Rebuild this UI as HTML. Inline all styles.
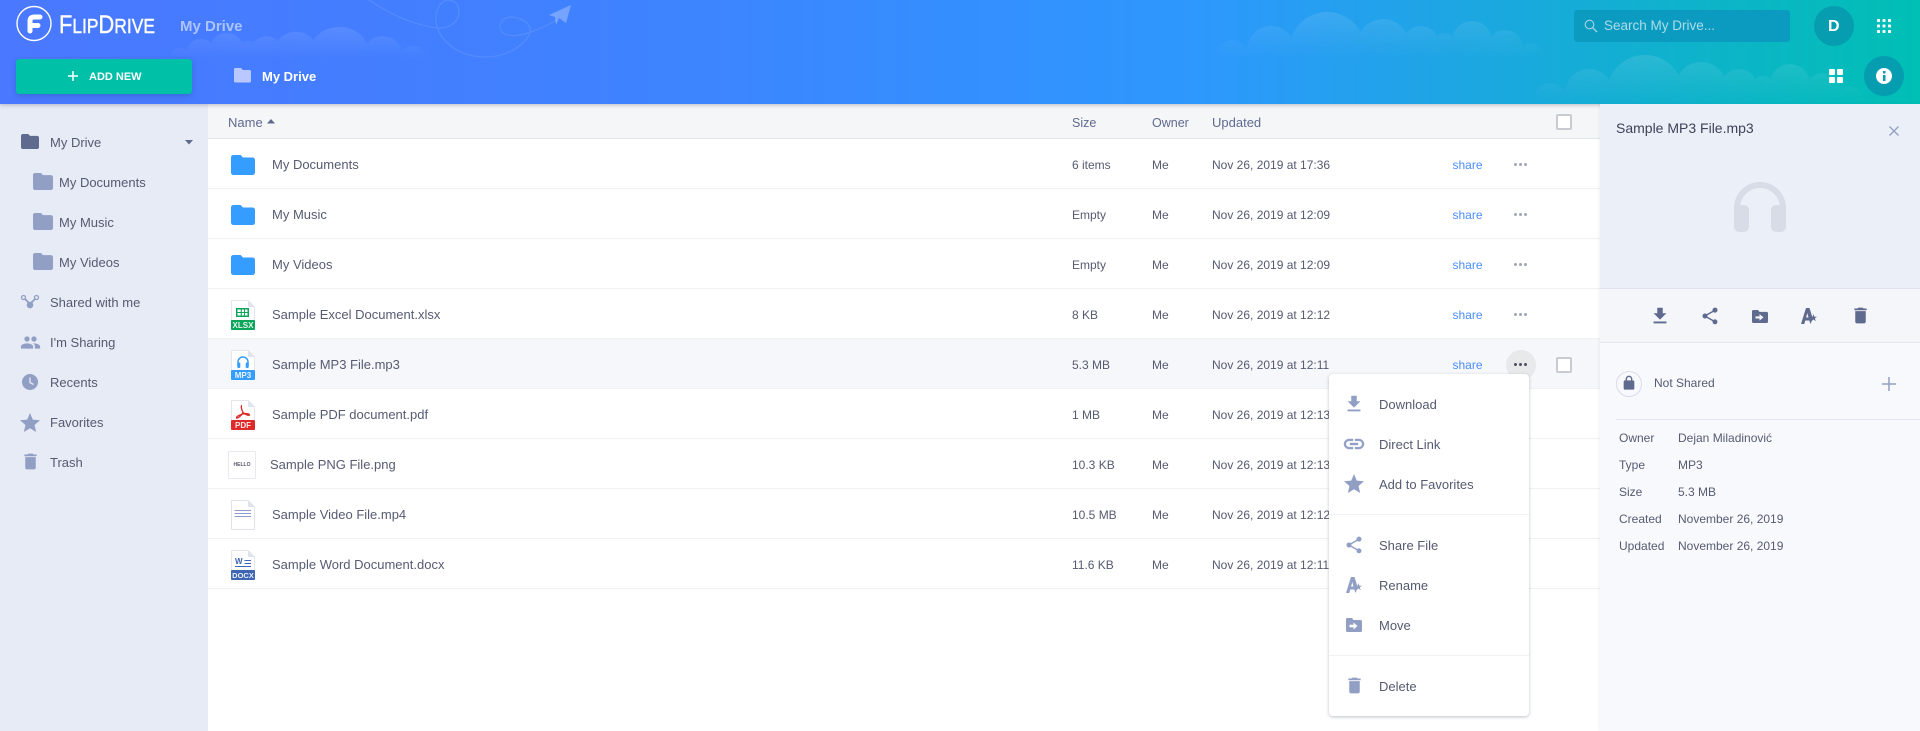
<!DOCTYPE html>
<html lang="en"><head><meta charset="utf-8"><title>FlipDrive</title>
<style>
html,body{margin:0;padding:0;width:1920px;height:731px;overflow:hidden;background:#fff;font-family:"Liberation Sans",sans-serif;color:#555a70}
.a,.t,svg.a{position:absolute}
.t{line-height:20px;white-space:nowrap;font-size:13px}
#hd{position:absolute;left:0;top:0;width:1920px;height:104px;background:linear-gradient(90deg,#4a78ff 0%,#3f82ff 33%,#2d98fd 62.5%,#00bfb4 100%);box-shadow:0 1px 4px rgba(40,50,80,.3);z-index:3}
#sb{position:absolute;left:0;top:104px;width:208px;height:627px;background:#e7ebf6;z-index:1}
#pn{position:absolute;left:1600px;top:104px;width:320px;height:627px;background:#f8f9fc;z-index:4;box-shadow:-1px 0 3px rgba(60,70,100,.07)}
#th{position:absolute;left:208px;top:104px;width:1392px;height:34px;background:#f5f6f8;border-bottom:1px solid #e4e5ea}
.r{position:absolute;left:208px;width:1392px;height:49px;border-bottom:1px solid #f0f1f4;background:#fff}
.r .t{font-size:12px;top:16px}
.r .t.n{font-size:13px;left:64px;color:#565b72}
.s{left:864px}.o{left:944px}.u{left:1004px}
.r .t.h{left:1244.5px;color:#4a8dff}
.d{position:absolute;left:1306px;top:24px;width:3px;height:3px;border-radius:50%;background:#a2a6b4;box-shadow:5px 0 0 #a2a6b4,10px 0 0 #a2a6b4}
.f{position:absolute;left:23px;top:11px}
.cb{position:absolute;width:12px;height:12px;border:2px solid #c9cbd2;border-radius:2px;background:#fff}
#m{position:absolute;left:1329px;top:374px;width:200px;height:342px;background:#fff;border-radius:4px;box-shadow:0 1px 3px rgba(40,45,70,.3);z-index:2}
#m .l{position:absolute;left:50px;line-height:20px;font-size:13px;white-space:nowrap;color:#555a70}
#m hr{position:absolute;left:0;width:200px;margin:0;border:0;border-top:1px solid #f0f1f4}
.k{left:19px;color:#565b72;font-size:12px}
.v{left:78px;color:#565b72;font-size:12px}
</style></head><body>

<div id="hd">
<svg class="a" style="left:0;top:0" width="1920" height="104" viewBox="0 0 1920 104">
<mask id="cm" maskUnits="userSpaceOnUse" x="1200" y="0" width="360" height="62"><rect x="1200" y="0" width="360" height="60" fill="url(#cg)"/></mask>
<linearGradient id="cg" gradientUnits="userSpaceOnUse" x1="0" y1="12" x2="0" y2="60"><stop offset="0" stop-color="#fff" stop-opacity=".11"/><stop offset="1" stop-color="#fff" stop-opacity="0"/></linearGradient>
<g fill="#fff">
<g mask="url(#cm)"><circle cx="1232" cy="56" r="16"/><circle cx="1271" cy="50" r="24"/><circle cx="1327" cy="50" r="38"/><circle cx="1383" cy="45" r="26"/><circle cx="1421" cy="44" r="18"/><circle cx="1445" cy="45" r="12"/><circle cx="1472" cy="41" r="20"/><circle cx="1505" cy="48" r="18"/><circle cx="1532" cy="55" r="12"/></g>
<g transform="translate(318 43)"><g mask="url(#cm)"><circle cx="1232" cy="56" r="16"/><circle cx="1271" cy="50" r="24"/><circle cx="1327" cy="50" r="38"/><circle cx="1383" cy="45" r="26"/><circle cx="1421" cy="44" r="18"/><circle cx="1445" cy="45" r="12"/><circle cx="1472" cy="41" r="20"/><circle cx="1505" cy="48" r="18"/><circle cx="1532" cy="55" r="12"/></g></g>
<g transform="matrix(-.776 0 0 .667 1369 19)"><g mask="url(#cm)"><circle cx="1232" cy="56" r="16"/><circle cx="1271" cy="50" r="24"/><circle cx="1327" cy="50" r="38"/><circle cx="1383" cy="45" r="26"/><circle cx="1421" cy="44" r="18"/><circle cx="1445" cy="45" r="12"/><circle cx="1472" cy="41" r="20"/><circle cx="1505" cy="48" r="18"/><circle cx="1532" cy="55" r="12"/></g></g>
</g>
<path d="M369 0C395 17 412 24 437 28C449 29 459 22 459 11C459 3 453 0 447 0C439 2 435 12 436 22C438 38 455 57 486 57C504 57 524 47 530 33C532 24 522 17 510 17C500 18 497 28 503 33C513 40 535 32 557 20" fill="none" stroke="#fff" stroke-opacity=".1" stroke-width="1.2"/>
<path d="M549 15L571 5L566 23L559 18L556 25L555 17Z" fill="#fff" fill-opacity=".28"/>
<circle cx="34" cy="23.5" r="17" fill="none" stroke="#fff" stroke-width="1.4"/>
<path d="M30 31V21C30 18 32 17 35 17H40M30 25.500H38" fill="none" stroke="#fff" stroke-width="5" stroke-linecap="round"/>
<text x="59" y="33" fill="#fff" font-family="Liberation Sans" font-weight="400" font-size="20" stroke="#fff" stroke-width=".4" textLength="96" lengthAdjust="spacingAndGlyphs"><tspan font-size="25">F</tspan>LIP<tspan font-size="25">D</tspan>RIVE</text>
<circle cx="1834" cy="26" r="20" fill="#069db0"/>
<circle cx="1884" cy="76" r="20" fill="#069db0"/>
<circle cx="1884" cy="76" r="8" fill="#fff"/>
<rect x="1883" y="71" width="2.500" height="2.500" fill="#069db0"/><rect x="1883" y="75" width="2.500" height="6" fill="#069db0"/>
<g fill="#fff">
<rect x="1829" y="69" width="6" height="6" rx="1"/><rect x="1837" y="69" width="6" height="6" rx="1"/><rect x="1829" y="77" width="6" height="6" rx="1"/><rect x="1837" y="77" width="6" height="6" rx="1"/>
<rect x="1877" y="19" width="3" height="3" rx=".8"/><rect x="1882.500" y="19" width="3" height="3" rx=".8"/><rect x="1888" y="19" width="3" height="3" rx=".8"/>
<rect x="1877" y="24.500" width="3" height="3" rx=".8"/><rect x="1882.500" y="24.500" width="3" height="3" rx=".8"/><rect x="1888" y="24.500" width="3" height="3" rx=".8"/>
<rect x="1877" y="30" width="3" height="3" rx=".8"/><rect x="1882.500" y="30" width="3" height="3" rx=".8"/><rect x="1888" y="30" width="3" height="3" rx=".8"/>
</g>
<path d="M234 69.500a1.500 1.500 0 0 1 1.500-1.500H241l2 2h6.500a1.500 1.500 0 0 1 1.500 1.500V81a1.500 1.500 0 0 1-1.500 1.500h-14A1.500 1.500 0 0 1 234 81Z" fill="#b9c9ff"/>
</svg>
<div class="t" style="left:180px;top:17px;font-size:15px;font-weight:700;color:rgba(255,255,255,.55)">My Drive</div>
<div class="a" style="left:16px;top:59px;width:176px;height:35px;background:#00c0a8;border-radius:3px;box-shadow:0 2px 6px rgba(30,50,120,.25)"></div>
<svg class="a" style="left:68px;top:71px" width="10" height="10" viewBox="0 0 10 10"><path d="M5 0V10M0 5H10" stroke="#fff" stroke-width="1.500"/></svg>
<div class="t" style="left:89px;top:67px;font-size:11px;font-weight:700;color:#fff">ADD NEW</div>
<div class="t" style="left:262px;top:67px;font-weight:700;color:#fff">My Drive</div>
<div class="a" style="left:1574px;top:10px;width:216px;height:32px;background:#0c9bc0;border-radius:3px"></div>
<svg class="a" style="left:1584px;top:19px" width="14" height="14" viewBox="0 0 14 14"><circle cx="5.500" cy="5.500" r="4.300" fill="none" stroke="#a8d4e4" stroke-width="1.100"/><path d="M8.700 8.700L13 13" stroke="#a8d4e4" stroke-width="1.300"/></svg>
<div class="t" style="left:1604px;top:16px;font-size:13.500px;color:rgba(255,255,255,.65)">Search My Drive...</div>
<div class="t" style="left:1828px;top:17px;font-size:16px;font-weight:700;color:#fff">D</div>
</div>

<div id="sb">
<svg class="a" style="left:21px;top:30px" width="18" height="15" viewBox="2 4 20 16" preserveAspectRatio="none"><path d="M10 4H4c-1.100 0-2 .9-2 2v12c0 1.100.9 2 2 2h16c1.100 0 2-.9 2-2V8c0-1.100-.9-2-2-2h-8l-2-2z" fill="#5f6a8f"/></svg>
<div class="t" style="left:50px;top:29px">My Drive</div>
<svg class="a" style="left:185px;top:36px" width="8" height="5" viewBox="0 0 8 5"><path d="M0 0H8L4 4.500Z" fill="#5f6a8f"/></svg>
<svg class="a" style="left:33px;top:69px" width="20" height="17" viewBox="2 4 20 16" preserveAspectRatio="none"><path d="M10 4H4c-1.100 0-2 .9-2 2v12c0 1.100.9 2 2 2h16c1.100 0 2-.9 2-2V8c0-1.100-.9-2-2-2h-8l-2-2z" fill="#929fc5"/></svg>
<div class="t" style="left:59px;top:69px">My Documents</div>
<svg class="a" style="left:33px;top:109px" width="20" height="17" viewBox="2 4 20 16" preserveAspectRatio="none"><path d="M10 4H4c-1.100 0-2 .9-2 2v12c0 1.100.9 2 2 2h16c1.100 0 2-.9 2-2V8c0-1.100-.9-2-2-2h-8l-2-2z" fill="#929fc5"/></svg>
<div class="t" style="left:59px;top:109px">My Music</div>
<svg class="a" style="left:33px;top:149px" width="20" height="17" viewBox="2 4 20 16" preserveAspectRatio="none"><path d="M10 4H4c-1.100 0-2 .9-2 2v12c0 1.100.9 2 2 2h16c1.100 0 2-.9 2-2V8c0-1.100-.9-2-2-2h-8l-2-2z" fill="#929fc5"/></svg>
<div class="t" style="left:59px;top:149px">My Videos</div>
<svg class="a" style="left:20px;top:190px" width="20" height="16" viewBox="0 0 20 16"><path d="M4 4L10 10L16 4" fill="none" stroke="#929fc5" stroke-width="1.800"/><circle cx="3.500" cy="3.500" r="2" fill="#e7ebf6" stroke="#929fc5" stroke-width="1.300"/><circle cx="16.500" cy="3.500" r="2" fill="#e7ebf6" stroke="#929fc5" stroke-width="1.300"/><circle cx="10" cy="11" r="3.300" fill="#929fc5"/></svg>
<div class="t" style="left:50px;top:189px">Shared with me</div>
<svg class="a" style="left:19.500px;top:228px" width="21" height="21" viewBox="0 0 24 24"><path d="M16 11c1.660 0 2.990-1.340 2.990-3S17.660 5 16 5c-1.660 0-3 1.340-3 3s1.340 3 3 3zm-8 0c1.660 0 2.990-1.340 2.990-3S9.660 5 8 5C6.340 5 5 6.340 5 8s1.340 3 3 3zm0 2c-2.330 0-7 1.170-7 3.500V19h14v-2.500c0-2.330-4.670-3.500-7-3.500zm8 0c-.29 0-.62.02-.97.05 1.160.84 1.970 1.970 1.970 3.450V19h6v-2.500c0-2.330-4.670-3.500-7-3.500z" fill="#929fc5"/></svg>
<div class="t" style="left:50px;top:229px">I'm Sharing</div>
<svg class="a" style="left:21px;top:269px" width="18" height="18" viewBox="0 0 18 18"><circle cx="9" cy="9" r="8" fill="#929fc5"/><path d="M9 4.500V9.500L12.500 11.500" fill="none" stroke="#e7ebf6" stroke-width="1.300"/></svg>
<div class="t" style="left:50px;top:269px">Recents</div>
<svg class="a" style="left:18px;top:307px" width="24" height="24" viewBox="0 0 24 24"><path d="M12 17.270L18.180 21l-1.640-7.030L22 9.240l-7.190-.61L12 2 9.190 8.630 2 9.240l5.460 4.730L5.820 21z" fill="#929fc5"/></svg>
<div class="t" style="left:50px;top:309px">Favorites</div>
<svg class="a" style="left:19.500px;top:347px" width="21" height="21" viewBox="0 0 24 24"><path d="M6 19c0 1.100.9 2 2 2h8c1.100 0 2-.9 2-2V7H6v12zM19 4h-3.500l-1-1h-5l-1 1H5v2h14V4z" fill="#929fc5"/></svg>
<div class="t" style="left:50px;top:349px">Trash</div>
</div>

<div id="th">
<div class="t" style="left:20px;top:9px;color:#5f6a8f">Name</div>
<svg class="a" style="left:59px;top:15px" width="8" height="5" viewBox="0 0 8 5"><path d="M0 4.500H8L4 0Z" fill="#5f6a8f"/></svg>
<div class="t s" style="top:9px;color:#5f6a8f;font-size:12.500px">Size</div>
<div class="t o" style="top:9px;color:#5f6a8f;font-size:12.500px">Owner</div>
<div class="t u" style="top:9px;color:#5f6a8f">Updated</div>
<div class="cb" style="left:1348px;top:10px"></div>
</div>

<div class="r" style="top:139px"><svg class="f" style="top:16px" width="24" height="20" viewBox="2 4 20 16" preserveAspectRatio="none"><path d="M10 4H4c-1.100 0-2 .9-2 2v12c0 1.100.9 2 2 2h16c1.100 0 2-.9 2-2V8c0-1.100-.9-2-2-2h-8l-2-2z" fill="#359dff"/></svg><div class="t n">My Documents</div><div class="t s">6 items</div><div class="t o">Me</div><div class="t u">Nov 26, 2019 at 17:36</div><div class="t h">share</div><div class="d"></div></div>
<div class="r" style="top:189px"><svg class="f" style="top:16px" width="24" height="20" viewBox="2 4 20 16" preserveAspectRatio="none"><path d="M10 4H4c-1.100 0-2 .9-2 2v12c0 1.100.9 2 2 2h16c1.100 0 2-.9 2-2V8c0-1.100-.9-2-2-2h-8l-2-2z" fill="#359dff"/></svg><div class="t n">My Music</div><div class="t s">Empty</div><div class="t o">Me</div><div class="t u">Nov 26, 2019 at 12:09</div><div class="t h">share</div><div class="d"></div></div>
<div class="r" style="top:239px"><svg class="f" style="top:16px" width="24" height="20" viewBox="2 4 20 16" preserveAspectRatio="none"><path d="M10 4H4c-1.100 0-2 .9-2 2v12c0 1.100.9 2 2 2h16c1.100 0 2-.9 2-2V8c0-1.100-.9-2-2-2h-8l-2-2z" fill="#359dff"/></svg><div class="t n">My Videos</div><div class="t s">Empty</div><div class="t o">Me</div><div class="t u">Nov 26, 2019 at 12:09</div><div class="t h">share</div><div class="d"></div></div>

<div class="r" style="top:289px"><svg class="f" width="24" height="30" viewBox="0 0 24 30"><path d="M1 .5H17L23.500 7V29a.5.5 0 0 1-.5.5H1a.5.5 0 0 1-.5-.5V1A.5.5 0 0 1 1 .5Z" fill="#fff" stroke="#e4e7f0"/><path d="M17 0L24 7H18a1 1 0 0 1-1-1Z" fill="#dfe3ee"/><path d="M5 8H18V17H5ZM6.500 9.500V12H9.700V9.500ZM10.800 9.500V12H13V9.500ZM14 9.500V12H16.500V9.500ZM6.500 13V15.500H9.700V13ZM10.800 13V15.500H13V13ZM14 13V15.500H16.500V13Z" fill="#0ca55c" fill-rule="evenodd"/><rect y="20" width="24" height="10" rx="1" fill="#0ca55c"/><text x="12" y="28.200" text-anchor="middle" font-family="Liberation Sans" font-weight="700" font-size="8" fill="#fff" fill-opacity=".9">XLSX</text></svg><div class="t n">Sample Excel Document.xlsx</div><div class="t s">8 KB</div><div class="t o">Me</div><div class="t u">Nov 26, 2019 at 12:12</div><div class="t h">share</div><div class="d"></div></div>

<div class="r" style="top:339px;background:#f6f7fa"><svg class="f" width="24" height="30" viewBox="0 0 24 30"><path d="M1 .5H17L23.500 7V29a.5.5 0 0 1-.5.5H1a.5.5 0 0 1-.5-.5V1A.5.5 0 0 1 1 .5Z" fill="#fff" stroke="#e4e7f0"/><path d="M17 0L24 7H18a1 1 0 0 1-1-1Z" fill="#dfe3ee"/><path d="M7 16V12a5 5 0 0 1 10 0V16" fill="none" stroke="#359dff" stroke-width="1.500"/><rect x="6.300" y="12.500" width="3" height="5.500" rx="1" fill="#359dff"/><rect x="14.700" y="12.500" width="3" height="5.500" rx="1" fill="#359dff"/><rect y="20" width="24" height="10" rx="1" fill="#359dff"/><text x="12" y="28.200" text-anchor="middle" font-family="Liberation Sans" font-weight="700" font-size="8" fill="#fff" fill-opacity=".9">MP3</text></svg><div class="t n">Sample MP3 File.mp3</div><div class="t s">5.3 MB</div><div class="t o">Me</div><div class="t u">Nov 26, 2019 at 12:11</div><div class="t h">share</div><div class="a" style="left:1298px;top:11px;width:30px;height:30px;border-radius:50%;background:#e8e9eb"></div><div class="d" style="background:#4c5060;box-shadow:5px 0 0 #4c5060,10px 0 0 #4c5060"></div><div class="cb" style="left:1348px;top:18px"></div></div>

<div class="r" style="top:389px"><svg class="f" width="24" height="30" viewBox="0 0 24 30"><path d="M1 .5H17L23.500 7V29a.5.5 0 0 1-.5.5H1a.5.5 0 0 1-.5-.5V1A.5.5 0 0 1 1 .5Z" fill="#fff" stroke="#e4e7f0"/><path d="M17 0L24 7H18a1 1 0 0 1-1-1Z" fill="#dfe3ee"/><path d="M11 5.500C9.500 5.500 10.500 9.500 12 12.500C10 16 7 18.500 5.500 18C5 16.500 9 14.500 14 13.500C16 13.500 18.500 14 18.500 15C18 16 14 14.500 12 12.500" fill="none" stroke="#de2a2a" stroke-width="1.300"/><rect y="20" width="24" height="10" rx="1" fill="#de2a2a"/><text x="12" y="28.200" text-anchor="middle" font-family="Liberation Sans" font-weight="700" font-size="8" fill="#fff" fill-opacity=".9">PDF</text></svg><div class="t n">Sample PDF document.pdf</div><div class="t s">1 MB</div><div class="t o">Me</div><div class="t u">Nov 26, 2019 at 12:13</div><div class="t h">share</div><div class="d"></div></div>

<div class="r" style="top:439px"><div class="a" style="left:20px;top:12px;width:26px;height:26px;border:1px solid #e8eaf0;background:#fff;border-radius:1px;text-align:center;font:700 5px/26px 'Liberation Sans',sans-serif;color:#55586a">HELLO</div><div class="t n" style="left:62px">Sample PNG File.png</div><div class="t s">10.3 KB</div><div class="t o">Me</div><div class="t u">Nov 26, 2019 at 12:13</div><div class="t h">share</div><div class="d"></div></div>

<div class="r" style="top:489px"><svg class="f" width="24" height="30" viewBox="0 0 24 30"><path d="M1 .5H17L23.500 7V29a.5.5 0 0 1-.5.5H1a.5.5 0 0 1-.5-.5V1A.5.5 0 0 1 1 .5Z" fill="#fff" stroke="#e0e3ee"/><path d="M17 0L24 7H18a1 1 0 0 1-1-1Z" fill="#dfe3ee"/><path d="M3.500 10.500H20M3.500 13.500H20M3.500 16.500H20" stroke="#8f9cc8" stroke-width="1"/></svg><div class="t n">Sample Video File.mp4</div><div class="t s">10.5 MB</div><div class="t o">Me</div><div class="t u">Nov 26, 2019 at 12:12</div><div class="t h">share</div><div class="d"></div></div>

<div class="r" style="top:539px"><svg class="f" width="24" height="30" viewBox="0 0 24 30"><path d="M1 .5H17L23.500 7V29a.5.5 0 0 1-.5.5H1a.5.5 0 0 1-.5-.5V1A.5.5 0 0 1 1 .5Z" fill="#fff" stroke="#e4e7f0"/><path d="M17 0L24 7H18a1 1 0 0 1-1-1Z" fill="#dfe3ee"/><text x="4" y="14" font-family="Liberation Sans" font-weight="700" font-size="8" fill="#3f66b3">W</text><path d="M13.500 10.500H20M13.500 13.500H20M4 16.500H20" stroke="#3f66b3" stroke-width="1"/><rect y="20" width="24" height="10" rx="1" fill="#3f66b3"/><text x="12" y="28.200" text-anchor="middle" font-family="Liberation Sans" font-weight="700" font-size="7.500" fill="#fff" fill-opacity=".9">DOCX</text></svg><div class="t n">Sample Word Document.docx</div><div class="t s">11.6 KB</div><div class="t o">Me</div><div class="t u">Nov 26, 2019 at 12:11</div><div class="t h">share</div><div class="d"></div></div>

<div id="m">
<svg class="a" style="left:14px;top:19px" width="22" height="22" viewBox="0 0 24 24"><path d="M19 9h-4V3H9v6H5l7 7 7-7zM5 18v2h14v-2H5z" fill="#929fc5"/></svg>
<div class="l" style="top:21px">Download</div>
<svg class="a" style="left:13px;top:58px" width="24" height="24" viewBox="0 0 24 24"><path d="M3.900 12c0-1.710 1.390-3.100 3.100-3.100h4V7H7c-2.760 0-5 2.240-5 5s2.240 5 5 5h4v-1.900H7c-1.710 0-3.100-1.390-3.100-3.100zM8 13h8v-2H8v2zm9-6h-4v1.900h4c1.710 0 3.100 1.390 3.100 3.100s-1.390 3.100-3.100 3.100h-4V17h4c2.760 0 5-2.240 5-5s-2.240-5-5-5z" fill="#929fc5" stroke="#929fc5" stroke-width=".4"/></svg>
<div class="l" style="top:61px">Direct Link</div>
<svg class="a" style="left:13px;top:98px" width="24" height="24" viewBox="0 0 24 24"><path d="M12 17.270L18.180 21l-1.640-7.030L22 9.240l-7.190-.61L12 2 9.190 8.630 2 9.240l5.460 4.730L5.820 21z" fill="#929fc5"/></svg>
<div class="l" style="top:101px">Add to Favorites</div>
<hr style="top:140px">
<svg class="a" style="left:15px;top:161px" width="20" height="20" viewBox="0 0 24 24"><path d="M18 16.080c-.76 0-1.440.3-1.960.77L8.910 12.700c.05-.23.09-.46.09-.7s-.04-.47-.09-.7l7.050-4.110c.54.5 1.250.81 2.040.81 1.660 0 3-1.340 3-3s-1.340-3-3-3-3 1.340-3 3c0 .24.04.47.09.7L8.040 9.810C7.500 9.310 6.790 9 6 9c-1.660 0-3 1.340-3 3s1.340 3 3 3c.79 0 1.500-.31 2.040-.81l7.120 4.160c-.05.21-.08.43-.08.65 0 1.610 1.310 2.920 2.920 2.920 1.610 0 2.920-1.310 2.920-2.920s-1.310-2.920-2.920-2.920z" fill="#929fc5"/></svg>
<div class="l" style="top:162px">Share File</div>
<svg class="a" style="left:17px;top:203px" width="16" height="16" viewBox="0 0 16 16"><path d="M0 16L5 0H8.500L11.800 10.500L9.500 16L8.300 12.500H4.300L3.300 16ZM5.100 9.500H7.500L6.300 5Z" fill="#929fc5" fill-rule="evenodd"/><path d="M12.500 6L13.400 8.700H16L13.900 10.300L14.700 13.200L12.500 11.500L10.300 13.200L11.100 10.300L9.500 8.700H11.600Z" fill="#929fc5"/></svg>
<div class="l" style="top:202px">Rename</div>
<svg class="a" style="left:17px;top:244px" width="16" height="14" viewBox="0 0 16 14"><path d="M0 1.500A1.500 1.500 0 0 1 1.500 0H6L7.500 2H14.500A1.500 1.500 0 0 1 16 3.500V12.500A1.500 1.500 0 0 1 14.500 14H1.500A1.500 1.500 0 0 1 0 12.500ZM3.500 6.800V9.200H7.500V11.500L11.500 8L7.500 4.500V6.800Z" fill="#929fc5" fill-rule="evenodd"/></svg>
<div class="l" style="top:242px">Move</div>
<hr style="top:281px">
<svg class="a" style="left:14.500px;top:301px" width="21" height="21" viewBox="0 0 24 24"><path d="M6 19c0 1.100.9 2 2 2h8c1.100 0 2-.9 2-2V7H6v12zM19 4h-3.500l-1-1h-5l-1 1H5v2h14V4z" fill="#929fc5"/></svg>
<div class="l" style="top:303px">Delete</div>
</div>

<div id="pn">
<div class="a" style="left:0;top:0;width:320px;height:184px;background:#ebf0f8;border-bottom:1px solid #dfe3ee"></div>
<div class="a" style="left:0;top:185px;width:320px;height:53px;background:#f5f6fa;border-bottom:1px solid #e4e7f1"></div>
<div class="t" style="left:16px;top:14px;font-size:14px;color:#3e4258">Sample MP3 File.mp3</div>
<svg class="a" style="left:289px;top:22px" width="10" height="10" viewBox="0 0 10 10"><path d="M.5 .5L9.500 9.500M9.500 .5L.5 9.500" stroke="#929fc5" stroke-width="1.300"/></svg>
<svg class="a" style="left:134px;top:78px" width="52" height="50" viewBox="0 0 52 50"><path d="M3 30V26a23 23 0 0 1 46 0V30" fill="none" stroke="#d8dce6" stroke-width="6"/><rect x="0" y="23" width="15" height="27" rx="5" fill="#d8dce6"/><rect x="37" y="23" width="15" height="27" rx="5" fill="#d8dce6"/></svg>
<svg class="a" style="left:49px;top:201px" width="22" height="22" viewBox="0 0 24 24"><path d="M19 9h-4V3H9v6H5l7 7 7-7zM5 18v2h14v-2H5z" fill="#5f6a8f"/></svg>
<svg class="a" style="left:100px;top:202px" width="20" height="20" viewBox="0 0 24 24"><path d="M18 16.080c-.76 0-1.440.3-1.960.77L8.910 12.700c.05-.23.09-.46.09-.7s-.04-.47-.09-.7l7.050-4.110c.54.5 1.250.81 2.040.81 1.660 0 3-1.340 3-3s-1.340-3-3-3-3 1.340-3 3c0 .24.04.47.09.7L8.040 9.810C7.500 9.310 6.790 9 6 9c-1.660 0-3 1.340-3 3s1.340 3 3 3c.79 0 1.500-.31 2.040-.81l7.120 4.160c-.05.21-.08.43-.08.65 0 1.610 1.310 2.920 2.920 2.920 1.610 0 2.920-1.310 2.920-2.920s-1.310-2.920-2.920-2.920z" fill="#5f6a8f"/></svg>
<svg class="a" style="left:152px;top:206px" width="16" height="13" viewBox="0 0 16 14" preserveAspectRatio="none"><path d="M0 1.500A1.500 1.500 0 0 1 1.500 0H6L7.500 2H14.500A1.500 1.500 0 0 1 16 3.500V12.500A1.500 1.500 0 0 1 14.500 14H1.500A1.500 1.500 0 0 1 0 12.500ZM3.500 6.800V9.200H7.500V11.500L11.500 8L7.500 4.500V6.800Z" fill="#5f6a8f" fill-rule="evenodd"/></svg>
<svg class="a" style="left:201px;top:204px" width="16" height="16" viewBox="0 0 16 16"><path d="M0 16L5 0H8.500L11.800 10.500L9.500 16L8.300 12.500H4.300L3.300 16ZM5.100 9.500H7.500L6.300 5Z" fill="#5f6a8f" fill-rule="evenodd"/><path d="M12.500 6L13.400 8.700H16L13.900 10.300L14.700 13.200L12.500 11.500L10.300 13.200L11.100 10.300L9.500 8.700H11.600Z" fill="#5f6a8f"/></svg>
<svg class="a" style="left:249.500px;top:201px" width="21" height="21" viewBox="0 0 24 24"><path d="M6 19c0 1.100.9 2 2 2h8c1.100 0 2-.9 2-2V7H6v12zM19 4h-3.500l-1-1h-5l-1 1H5v2h14V4z" fill="#5f6a8f"/></svg>
<div class="a" style="left:16px;top:267px;width:24px;height:24px;border:1px solid #d8dcec;border-radius:50%"></div>
<svg class="a" style="left:21px;top:271px" width="16" height="16" viewBox="0 0 24 24"><path d="M18 8h-1V6c0-2.760-2.240-5-5-5S7 3.240 7 6v2H6c-1.100 0-2 .9-2 2v10c0 1.100.9 2 2 2h12c1.100 0 2-.9 2-2V10c0-1.100-.9-2-2-2zM9 6c0-1.660 1.340-3 3-3s3 1.340 3 3v2H9V6z" fill="#5f6a8f"/></svg>
<div class="t" style="left:54px;top:269px;font-size:12px;color:#565b72">Not Shared</div>
<svg class="a" style="left:282px;top:273px" width="14" height="14" viewBox="0 0 14 14"><path d="M7 0V14M0 7H14" stroke="#929fc5" stroke-width="1.500"/></svg>
<div class="a" style="left:16px;top:315px;width:304px;height:1px;background:#e4e7f1"></div>
<div class="t k" style="top:324px">Owner</div><div class="t v" style="top:324px">Dejan Miladinović</div>
<div class="t k" style="top:351px">Type</div><div class="t v" style="top:351px">MP3</div>
<div class="t k" style="top:378px">Size</div><div class="t v" style="top:378px">5.3 MB</div>
<div class="t k" style="top:405px">Created</div><div class="t v" style="top:405px">November 26, 2019</div>
<div class="t k" style="top:432px">Updated</div><div class="t v" style="top:432px">November 26, 2019</div>
</div>
</body></html>
